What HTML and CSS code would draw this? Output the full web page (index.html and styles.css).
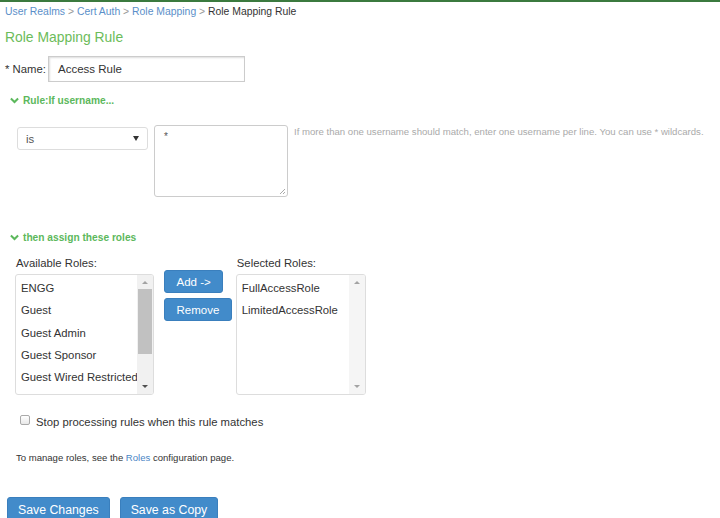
FILE: index.html
```html
<!DOCTYPE html>
<html lang="en">
<head>
    <meta charset="UTF-8">
    <title>Role Mapping Rule</title>
    <link rel="stylesheet" href="styles.css">
</head>
<body>
    <div class="topline"></div>
    <div class="page">
        <div class="breadcrumb">
            <a href="#">User Realms</a> &gt; <a href="#">Cert Auth</a> &gt; <a href="#">Role Mapping</a> &gt; <span>Role Mapping Rule</span>
        </div>
        <h1 class="title">Role Mapping Rule</h1>

        <div class="name-row">
            <label>* Name:</label>
            <div class="text-input">Access Rule</div>
        </div>

        <div class="section-head">
            <svg width="9" height="7" viewBox="0 0 10 7"><path d="M1 1.2 L5 5.2 L9 1.2" fill="none" stroke="#5cb85c" stroke-width="2.2"/></svg>
            Rule:If username...
        </div>

        <div class="rule-row">
            <div class="select-box">
                <span>is</span>
                <svg width="6" height="5" viewBox="0 0 6 5"><path d="M0 0 H6 L3 5 Z" fill="#333"/></svg>
            </div>
            <div class="textarea">
                <span>*</span>
                <svg class="grip" width="8" height="8" viewBox="0 0 8 8"><path d="M7 2 L2 7 M7 5 L5 7" stroke="#aaa" stroke-width="1"/></svg>
            </div>
            <div class="help">If more than one username should match, enter one username per line. You can use * wildcards.</div>
        </div>

        <div class="section-head second">
            <svg width="9" height="7" viewBox="0 0 10 7"><path d="M1 1.2 L5 5.2 L9 1.2" fill="none" stroke="#5cb85c" stroke-width="2.2"/></svg>
            then assign these roles
        </div>

        <div class="roles">
            <div class="role-col">
                <div class="role-label">Available Roles:</div>
                <div class="listbox available">
                    <ul>
                        <li>ENGG</li>
                        <li>Guest</li>
                        <li>Guest Admin</li>
                        <li>Guest Sponsor</li>
                        <li>Guest Wired Restricted</li>
                    </ul>
                    <div class="scrollbar">
                        <span class="arrow up"></span>
                        <div class="track"><div class="thumb"></div></div>
                        <span class="arrow down dark"></span>
                    </div>
                </div>
            </div>
            <div class="role-buttons">
                <button class="btn small">Add -&gt;</button>
                <button class="btn small">Remove</button>
            </div>
            <div class="role-col">
                <div class="role-label">Selected Roles:</div>
                <div class="listbox selected">
                    <ul>
                        <li>FullAccessRole</li>
                        <li>LimitedAccessRole</li>
                    </ul>
                    <div class="scrollbar light">
                        <span class="arrow up"></span>
                        <div class="track"></div>
                        <span class="arrow down"></span>
                    </div>
                </div>
            </div>
        </div>

        <div class="check-row">
            <span class="checkbox"></span>
            <span>Stop processing rules when this rule matches</span>
        </div>

        <p class="note">To manage roles, see the <a href="#">Roles</a> configuration page.</p>

        <div class="actions">
            <button class="btn big">Save Changes</button>
            <button class="btn big">Save as Copy</button>
        </div>
    </div>
</body>
</html>
```

FILE: styles.css
```css
* {
    margin: 0;
    padding: 0;
    box-sizing: border-box;
    font-family: "Liberation Sans", Arial, sans-serif;
}
body {
    background: white;
    color: #333;
    overflow: hidden;
}
.topline {
    height: 2px;
    background: #3b7a3f;
}
.page {
    padding: 0 5px;
}
.breadcrumb {
    font-size: 10.4px;
    margin-top: 4px;
    height: 13px;
    color: #999;
    white-space: nowrap;
}
.breadcrumb a {
    color: #5b8fc9;
    text-decoration: none;
}
.breadcrumb span {
    color: #333;
}
.title {
    font-size: 13.9px;
    font-weight: normal;
    color: #6cbc5a;
    margin-top: 10px;
    height: 17px;
}
.name-row {
    display: flex;
    align-items: center;
    margin-top: 10px;
    font-size: 11.3px;
}
.name-row label {
    width: 43px;
    flex-shrink: 0;
    white-space: nowrap;
}
.text-input {
    width: 197px;
    height: 26px;
    border: 1px solid #ccc;
    box-shadow: inset 1px 1px 2px #ddd;
    padding: 6px 9px;
    font-size: 11.5px;
    color: #333;
}
.section-head {
    display: flex;
    align-items: center;
    gap: 4px;
    color: #5cb85c;
    font-weight: bold;
    font-size: 10.2px;
    margin-top: 13px;
    padding-left: 5px;
}
.rule-row {
    display: flex;
    align-items: flex-start;
    margin-top: 19px;
    padding-left: 12px;
}
.select-box {
    display: flex;
    justify-content: space-between;
    align-items: center;
    width: 131px;
    height: 23px;
    margin-top: 2px;
    border: 1px solid #ddd;
    border-radius: 3px;
    padding: 0 8px 0 8px;
    font-size: 11.3px;
    color: #555;
}
.textarea {
    position: relative;
    width: 134px;
    height: 72px;
    margin-left: 6px;
    border: 1px solid #ccc;
    border-radius: 3px;
    padding: 5px 9px;
    font-size: 10px;
    color: #555;
}
.textarea .grip {
    position: absolute;
    right: 1px;
    bottom: 1px;
}
.help {
    font-size: 9.6px;
    color: #aaa;
    margin-left: 6px;
    margin-top: 1px;
    white-space: nowrap;
}
.section-head.second {
    margin-top: 35px;
}
.roles {
    display: flex;
    margin-top: 14px;
    padding-left: 10px;
}
.role-col {
    display: flex;
    flex-direction: column;
}
.role-label {
    font-size: 11.3px;
    height: 14px;
    margin-left: 1px;
}
.listbox {
    display: flex;
    height: 121px;
    margin-top: 3px;
    border: 1px solid #ddd;
    border-radius: 3px;
    font-size: 11.3px;
    color: #333;
    overflow: hidden;
}
.listbox ul {
    list-style: none;
    padding: 7px 0 0 5px;
    flex: 1;
    min-width: 0;
    overflow: hidden;
}
.listbox li {
    height: 22.3px;
    white-space: nowrap;
}
.available {
    width: 139px;
}
.selected {
    width: 130px;
}
.scrollbar {
    width: 16px;
    flex-shrink: 0;
    background: #f1f1f1;
    display: flex;
    flex-direction: column;
    align-items: center;
}
.scrollbar.light {
    background: #f5f5f5;
}
.arrow {
    width: 0;
    height: 0;
    border-left: 3px solid transparent;
    border-right: 3px solid transparent;
    margin: 6px 0 5px;
}
.arrow.up {
    border-bottom: 3px solid #a3a3a3;
}
.arrow.down {
    border-top: 3px solid #a3a3a3;
    margin: 5px 0 6px;
}
.arrow.down.dark {
    border-top-color: #505050;
}
.track {
    flex: 1;
    width: 100%;
    padding: 0 1px;
}
.thumb {
    height: 65px;
    background: #c1c1c1;
}
.role-buttons {
    display: flex;
    flex-direction: column;
    align-items: flex-start;
    gap: 5px;
    margin: 13px 4px 0 10px;
}
.btn {
    background: #428bca;
    color: white;
    border: 1px solid #3a7fbd;
    border-radius: 3px;
    font-family: "Liberation Sans", Arial, sans-serif;
    cursor: pointer;
}
.btn.small {
    font-size: 11.5px;
    height: 23px;
    padding: 0 11.5px;
}
.check-row {
    display: flex;
    align-items: center;
    gap: 6px;
    margin-top: 21px;
    padding-left: 15px;
    font-size: 11.3px;
}
.checkbox {
    width: 10px;
    height: 10px;
    border: 1px solid #aaa;
    border-radius: 2px;
    background: linear-gradient(#fff, #e8e8e8);
    margin-top: -4px;
}
.note {
    font-size: 9.55px;
    color: #333;
    margin-top: 24px;
    padding-left: 11px;
}
.note a {
    color: #4a86c5;
    text-decoration: none;
}
.actions {
    display: flex;
    gap: 10px;
    margin-top: 34px;
    padding-left: 2px;
}
.btn.big {
    font-size: 12.3px;
    height: 26px;
    padding: 0 10px;
    align-self: flex-start;
}
```
